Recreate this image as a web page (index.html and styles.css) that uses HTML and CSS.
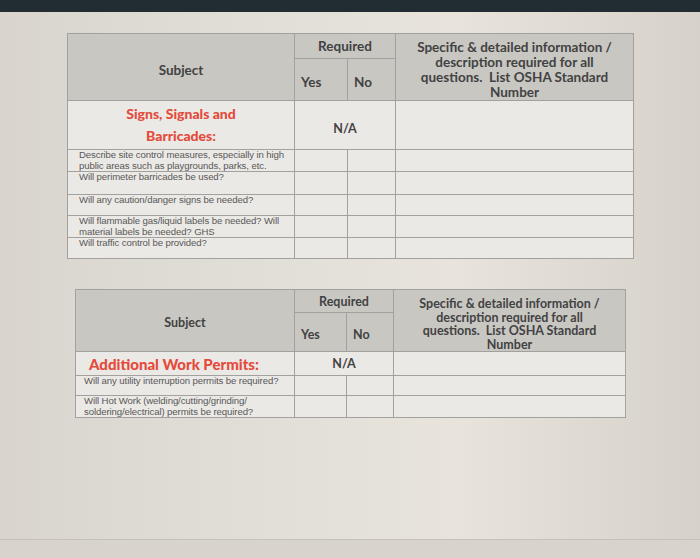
FILE: index.html
```html
<!DOCTYPE html>
<html>
<head>
<meta charset="utf-8">
<link rel="stylesheet" href="styles.css">
</head>
<body>
<div class="topbar"></div>
<main class="paper">
  <table class="form t1">
    <colgroup><col class="c-subj"><col class="c-yes"><col class="c-no"><col class="c-spec"></colgroup>
    <thead>
      <tr class="h-req">
        <th rowspan="2" class="subj-h">Subject</th>
        <th colspan="2" class="req-h">Required</th>
        <th rowspan="2" class="spec-h">Specific &amp; detailed information /<br>description required for all<br>questions.&nbsp; List OSHA Standard<br>Number</th>
      </tr>
      <tr class="h-yn"><th class="yn">Yes</th><th class="yn">No</th></tr>
    </thead>
    <tbody>
      <tr class="r-title"><td class="title">Signs, Signals and<br>Barricades:</td><td colspan="2" class="na">N/A</td><td></td></tr>
      <tr class="r1"><td class="q">Describe site control measures, especially in high<br>public areas such as playgrounds, parks, etc.</td><td></td><td></td><td></td></tr>
      <tr class="r2"><td class="q">Will perimeter barricades be used?</td><td></td><td></td><td></td></tr>
      <tr class="r3"><td class="q">Will any caution/danger signs be needed?</td><td></td><td></td><td></td></tr>
      <tr class="r4"><td class="q">Will flammable gas/liquid labels be needed? Will<br>material labels be needed? GHS</td><td></td><td></td><td></td></tr>
      <tr class="r5"><td class="q">Will traffic control be provided?</td><td></td><td></td><td></td></tr>
    </tbody>
  </table>

  <table class="form t2">
    <colgroup><col class="c-subj"><col class="c-yes"><col class="c-no"><col class="c-spec"></colgroup>
    <thead>
      <tr class="h-req">
        <th rowspan="2" class="subj-h">Subject</th>
        <th colspan="2" class="req-h">Required</th>
        <th rowspan="2" class="spec-h">Specific &amp; detailed information /<br>description required for all<br>questions.&nbsp; List OSHA Standard<br>Number</th>
      </tr>
      <tr class="h-yn"><th class="yn">Yes</th><th class="yn">No</th></tr>
    </thead>
    <tbody>
      <tr class="r-title"><td class="title">Additional Work Permits:</td><td colspan="2" class="na">N/A</td><td></td></tr>
      <tr class="r1"><td class="q">Will any utility interruption permits be required?</td><td></td><td></td><td></td></tr>
      <tr class="r2"><td class="q">Will Hot Work (welding/cutting/grinding/<br>soldering/electrical) permits be required?</td><td></td><td></td><td></td></tr>
    </tbody>
  </table>
  <div class="bottom-edge"></div>
</main>
</body>
</html>
```

FILE: styles.css
```css
html, body {
  margin: 0;
  padding: 0;
}
body {
  width: 700px;
  height: 558px;
  overflow: hidden;
  background: #dcd9d2;
  font-family: Lato, "Liberation Sans", sans-serif;
}
.topbar {
  height: 12px;
  background: #222c33;
}
.paper {
  height: 546px;
  background: linear-gradient(90deg, #d9d5ce 0%, #e2dfd9 40%, #e8e4db 65%, #d6d2cb 100%);
  display: flex;
  flex-direction: column;
  position: relative;
}
.form {
  border-collapse: collapse;
  table-layout: fixed;
  color: #424242;
}
.form th, .form td {
  border: 1px solid #a3a19d;
  padding: 0;
  overflow: hidden;
}
.form th {
  background: #c9c7c2;
  font-weight: 700;
  font-size: 13px;
}
.form td {
  background: #ebe9e5;
}

/* table 1 */
.t1 {
  margin: 21px 0 0 67px;
  width: 566px;
}
.t1 .c-subj { width: 227px; }
.t1 .c-yes { width: 53px; }
.t1 .c-no { width: 48px; }
.t1 .c-spec { width: 238px; }
.t1 .h-req { height: 25px; }
.t1 .h-yn { height: 42px; }
.t1 .r-title { height: 49px; }
.t1 .r1 { height: 21px; }
.t1 .r2 { height: 23px; }
.t1 .r3 { height: 21px; }
.t1 .r4 { height: 22px; }
.t1 .r5 { height: 21px; }
.t1 th { font-size: 13.5px; }
.t1 .subj-h { padding-top: 5px; }
.t1 .spec-h {
  font-size: 13.5px;
  line-height: 15px;
  padding: 6px 6px 0 6px;
}

/* table 2 */
.t2 {
  margin: 30px 0 0 75px;
  width: 550px;
}
.t2 .c-subj { width: 219px; }
.t2 .c-yes { width: 52px; }
.t2 .c-no { width: 47px; }
.t2 .c-spec { width: 232px; }
.t2 .h-req { height: 23px; }
.t2 .h-yn { height: 39px; }
.t2 .r-title { height: 24px; }
.t2 .r1 { height: 20px; }
.t2 .r2 { height: 21px; }
.t2 th { font-size: 12.5px; }
.t2 .subj-h { padding-top: 4px; }
.t2 .spec-h {
  font-size: 12.5px;
  line-height: 13.5px;
  padding: 7px 6px 0 6px;
}

.spec-h {
  text-align: center;
  vertical-align: top;
}
.yn {
  text-align: left;
  padding-left: 6px !important;
  padding-top: 4px !important;
}
.title {
  color: #e44b3c;
  font-weight: 900;
  font-size: 14px;
  line-height: 22px;
  text-align: center;
}
.t2 .title {
  font-size: 15px;
  line-height: 18px;
  text-align: left;
  padding-left: 13px;
}
.na {
  text-align: center;
  font-weight: 700;
  font-size: 12.5px;
  color: #424242;
}
.t1 .na { vertical-align: top; padding-top: 20px; }
.q {
  font-family: "Liberation Sans", Arial, sans-serif;
  font-size: 9.6px;
  line-height: 10.5px;
  color: #585858;
  vertical-align: top;
  padding-top: 1px;
  letter-spacing: -0.1px;
  white-space: nowrap;
}
.t1 .q { padding-left: 11px; }
.t2 .q { padding-left: 8px; }
.bottom-edge {
  position: absolute;
  left: 0;
  right: 0;
  bottom: 0;
  height: 18px;
  border-top: 1px solid #c5c1b9;
  background: #d8d4cc;
}
```
